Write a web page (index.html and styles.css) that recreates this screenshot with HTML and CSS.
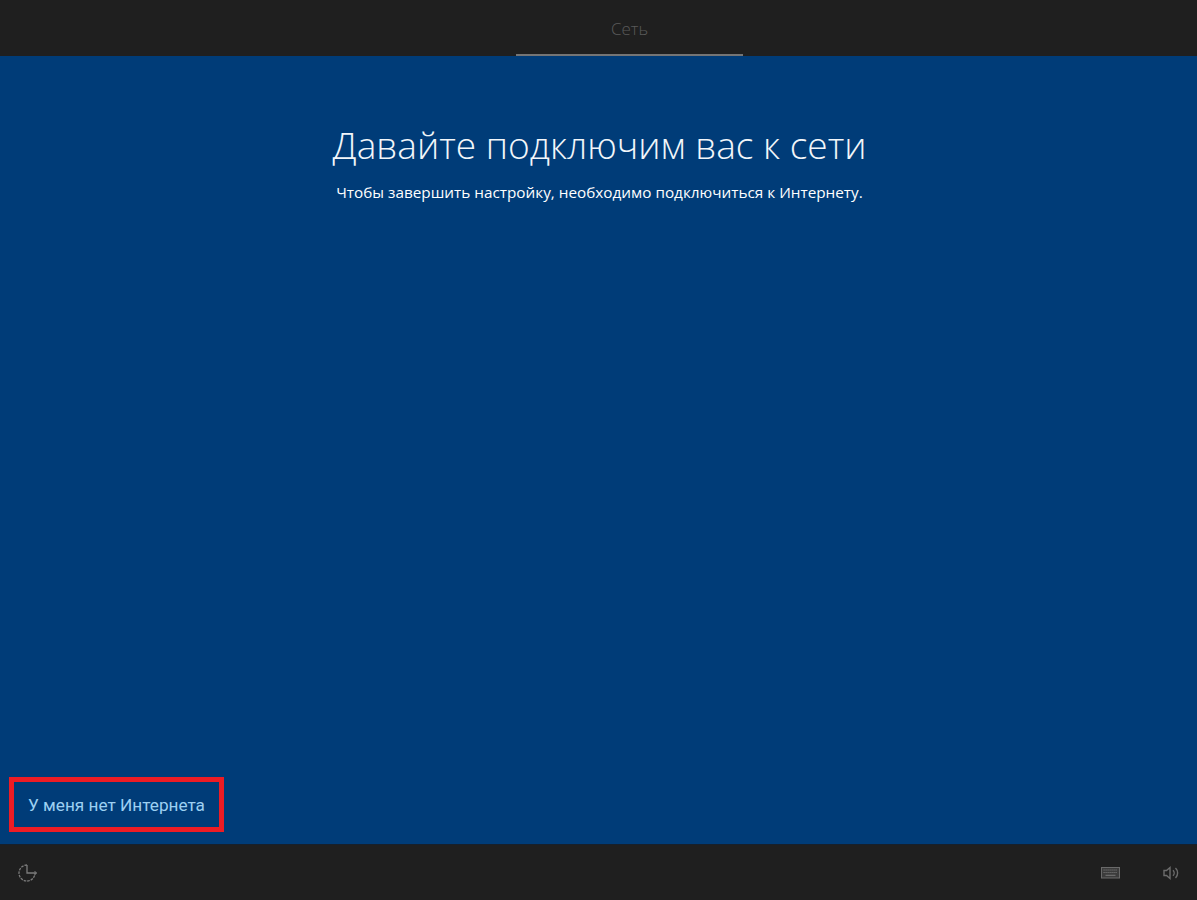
FILE: index.html
```html
<!DOCTYPE html>
<html lang="ru">
<head>
<meta charset="utf-8">
<title>Сеть</title>
<link rel="stylesheet" href="styles.css">
</head>
<body>
<div class="screen">
  <header class="topbar">
    <div class="tab">Сеть</div>
  </header>
  <main class="content">
    <div class="intro">
      <h1 class="title">Давайте подключим вас к сети</h1>
      <p class="subtitle">Чтобы завершить настройку, необходимо подключиться к Интернету.</p>
    </div>
    <div class="skip">
      <div class="highlight"><span class="skip-link">У меня нет Интернета</span></div>
    </div>
  </main>
  <footer class="bottombar">
    <svg class="icon" width="22" height="22" viewBox="0 0 22 22" fill="none" stroke="#7c7c7c" stroke-width="1.300">
      <path d="M10 3a8 8 0 1 0 8 8" stroke-dasharray="2.600 1"/>
      <path d="M10 3v8h9.500"/>
      <path d="M17.500 9l2 2-2 2" stroke-width="1"/>
    </svg>
    <div class="right-icons">
      <svg class="icon" width="20" height="12" viewBox="0 0 20 12" fill="none">
        <rect x="0.500" y="0.500" width="18" height="10.500" fill="#3c3c3c" stroke="#6a6a6a"/>
        <path d="M2.500 3h14M2.500 5.500h14" stroke="#777" stroke-dasharray="1.200 .8"/>
        <path d="M4.500 8.300h10" stroke="#777"/>
      </svg>
      <svg class="icon" width="18" height="16" viewBox="0 0 18 16" fill="none" stroke="#6c6c6c" stroke-width="1.400">
        <path d="M1 5.500h2.500L7 2.500v11l-3.500-3H1z"/>
        <path d="M10 5.200a4 4 0 0 1 0 5.600M12.500 3a7 7 0 0 1 0 10"/>
      </svg>
    </div>
  </footer>
</div>
</body>
</html>
```

FILE: styles.css
```css
html, body {
  margin: 0;
  padding: 0;
  background: #1f1f1f;
}

.screen {
  width: 1197px;
  height: 900px;
  display: flex;
  flex-direction: column;
  font-family: "Open Sans", "Noto Sans", sans-serif;
  overflow: hidden;
}

.topbar {
  height: 56px;
  flex: none;
  background: #1f1f1f;
  display: flex;
  justify-content: center;
  box-sizing: border-box;
}

.tab {
  width: 227px;
  margin-left: 62px;
  height: 56px;
  box-sizing: border-box;
  border-bottom: 2px solid #757575;
  text-align: center;
  font-size: 17px;
  line-height: 58px;
  color: #5a5a5a;
  font-weight: 300;
}

.content {
  flex: 1;
  background: #003c78;
  display: flex;
  flex-direction: column;
  justify-content: space-between;
}

.intro {
  text-align: center;
  padding-top: 64px;
  padding-left: 2px;
  color: #fff;
}

.title {
  margin: 0;
  font-size: 37.100px;
  font-weight: 300;
  line-height: 50px;
  color: #f2f6fa;
}

.subtitle {
  margin: 12px 0 0;
  font-size: 15.300px;
  line-height: 20px;
  color: #fff;
}

.skip {
  padding: 0 0 12px 9px;
}

.highlight {
  width: 215px;
  height: 55px;
  box-sizing: border-box;
  border: 5px solid #ed1c24;
  display: flex;
  align-items: center;
  padding-left: 14px;
}

.skip-link {
  font-family: "Roboto", sans-serif;
  font-size: 17.200px;
  color: #9dd0f2;
  white-space: nowrap;
}

.bottombar {
  height: 56px;
  flex: none;
  background: #1f1f1f;
  border-top: 1px solid #16202c;
  box-sizing: border-box;
  display: flex;
  align-items: center;
  justify-content: space-between;
  padding: 0 16px 0 17px;
}

.right-icons {
  display: flex;
  align-items: center;
  gap: 42px;
}
```
